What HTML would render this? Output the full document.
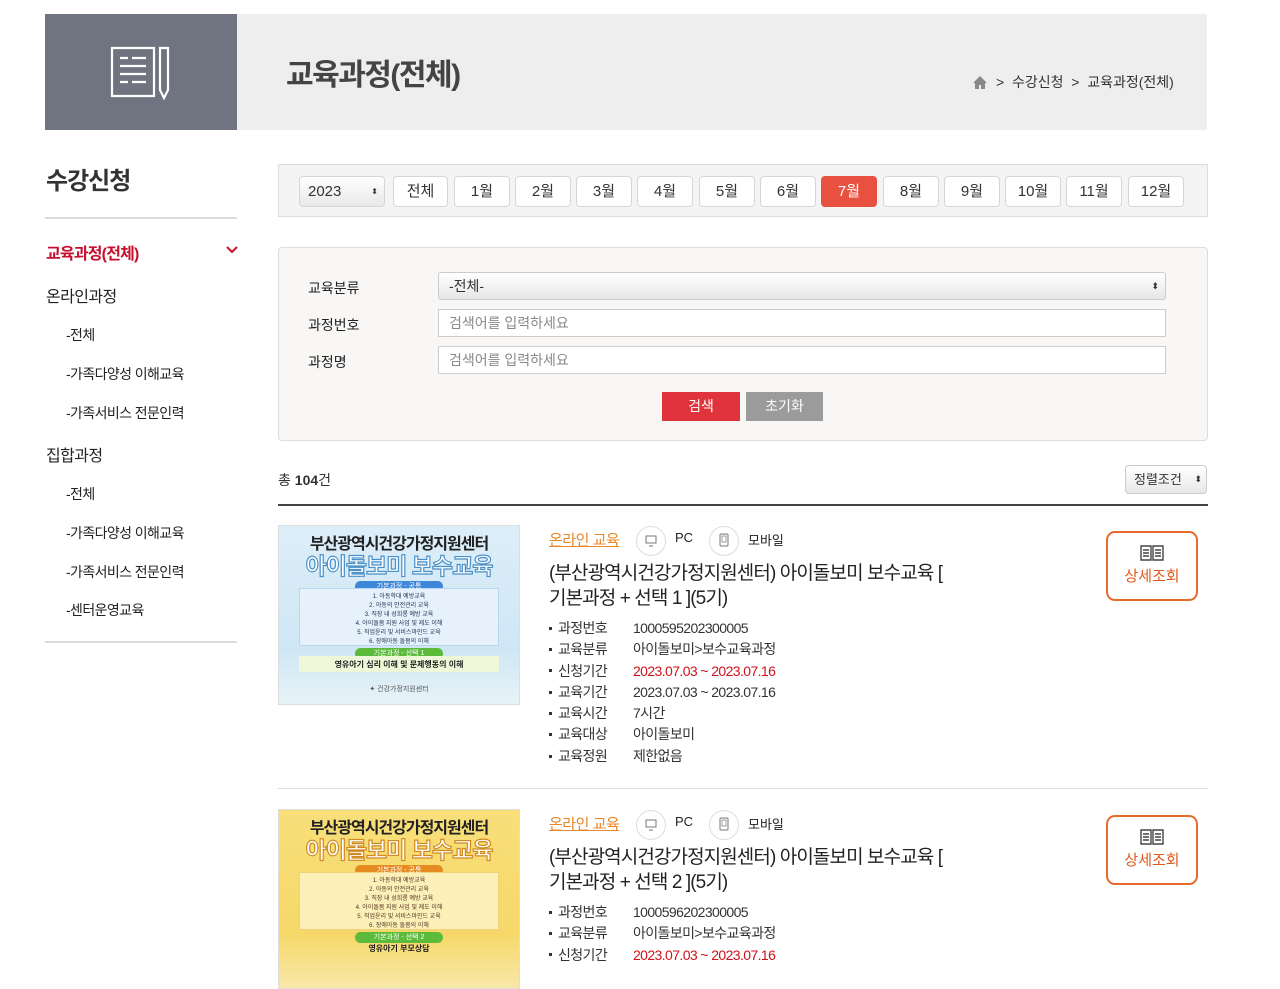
<!DOCTYPE html>
<html><head><meta charset="utf-8"><style>
*{margin:0;padding:0;box-sizing:border-box}
body{width:1280px;height:955px;overflow:hidden;background:#fff;font-family:"Liberation Sans","Noto Sans CJK KR",sans-serif;color:#222;position:relative}
.a{position:absolute;white-space:nowrap}
.mb{position:absolute;top:176px;height:31px;width:56px;border:1px solid #d6d6d6;border-radius:4px;background:#fff;font-size:15px;text-align:center;line-height:29px;color:#333}
.lbl{position:absolute;left:308px;font-size:14px;color:#222}
.inp{position:absolute;left:438px;width:728px;height:28px;border:1px solid #ccc;background:#fff;font-size:14px;color:#888;padding-left:10px;line-height:26px}
.sm{position:absolute;left:66px;font-size:14px;color:#222;letter-spacing:-0.6px}
.det{position:absolute;left:549px;font-size:14px;line-height:21.3px;color:#333;letter-spacing:-0.6px}
.det div{white-space:nowrap}
.det b{font-weight:normal;display:inline-block;width:84px}
.det b:before{content:"";display:inline-block;width:3px;height:3px;background:#333;margin:0 6px 2px 0;vertical-align:middle}
.circ{position:absolute;width:30px;height:30px;border-radius:50%;border:1px solid #ddd;background:#fff}
.btn{position:absolute;left:1106px;width:92px;height:70px;border:2px solid #e56a2b;border-radius:9px;color:#e05a1b;font-size:15px;text-align:center}
.img{position:absolute;left:278px;width:242px;height:180px;border:1px solid #ddd;overflow:hidden;text-align:center}
.tt{position:absolute;left:549px;font-size:19px;line-height:24.5px;color:#222;letter-spacing:-0.9px;white-space:nowrap}
</style></head><body>
<div class="a" style="left:45px;top:14px;width:192px;height:116px;background:#6f7480"></div>
<svg class="a" style="left:110px;top:44px" width="64" height="56" viewBox="0 0 64 56" fill="none" stroke="#fff" stroke-width="2.2">
<rect x="2" y="4" width="42" height="48"/>
<path d="M10 14h8M22 14h14M10 22h26M10 30h26M10 38h8M22 38h14"/>
<path d="M50 4h8v42l-4 8-4-8z"/></svg>
<div class="a" style="left:237px;top:14px;width:970px;height:116px;background:#eeeeee"></div>
<div class="a" style="left:286px;top:50px;font-size:30px;font-weight:bold;color:#444;letter-spacing:-1.5px">교육과정(전체)</div>
<svg class="a" style="left:973px;top:76px" width="14" height="13" viewBox="0 0 14 13"><path d="M7 0L0 7h2v6h4V9h2v4h4V7h2z" fill="#888"/></svg>
<div class="a" style="left:996px;top:72px;font-size:14px;color:#333">&gt; &nbsp;수강신청 &nbsp;&gt; &nbsp;교육과정(전체)</div>
<div class="a" style="left:46px;top:161px;font-size:24px;font-weight:bold;color:#333;letter-spacing:-1px">수강신청</div>
<div class="a" style="left:45px;top:217px;width:192px;height:2px;background:#ddd"></div>
<div class="a" style="left:46px;top:240px;font-size:16px;font-weight:bold;color:#c8102e;letter-spacing:-0.8px">교육과정(전체)</div>
<svg class="a" style="left:226px;top:246px" width="12" height="8"><path d="M1 1l5 5 5-5" stroke="#c8102e" stroke-width="2" fill="none"/></svg>
<div class="a" style="left:46px;top:283px;font-size:16px;color:#222;letter-spacing:-0.6px">온라인과정</div>
<div class="sm" style="top:325px">-전체</div>
<div class="sm" style="top:364px">-가족다양성 이해교육</div>
<div class="sm" style="top:403px">-가족서비스 전문인력</div>
<div class="a" style="left:46px;top:442px;font-size:16px;color:#222;letter-spacing:-0.6px">집합과정</div>
<div class="sm" style="top:484px">-전체</div>
<div class="sm" style="top:523px">-가족다양성 이해교육</div>
<div class="sm" style="top:562px">-가족서비스 전문인력</div>
<div class="sm" style="top:600px">-센터운영교육</div>
<div class="a" style="left:45px;top:641px;width:192px;height:2px;background:#ddd"></div>
<div class="a" style="left:278px;top:164px;width:930px;height:53px;background:#f4f4f4;border:1px solid #ddd"></div>
<div class="a" style="left:299px;top:176px;width:86px;height:31px;border:1px solid #d6d6d6;border-radius:4px;background:linear-gradient(#fff,#e8e8e8);font-size:15px;line-height:29px;padding-left:8px;color:#333">2023<span style="position:absolute;right:6px;font-size:8px;top:0">⬍</span></div>
<div class="mb" style="left:393px;width:55px">전체</div>
<div class="mb" style="left:454px">1월</div>
<div class="mb" style="left:515px">2월</div>
<div class="mb" style="left:576px">3월</div>
<div class="mb" style="left:637px">4월</div>
<div class="mb" style="left:699px">5월</div>
<div class="mb" style="left:760px">6월</div>
<div class="mb" style="left:821px;background:#e8503f;border-color:#e8503f;color:#fff">7월</div>
<div class="mb" style="left:883px">8월</div>
<div class="mb" style="left:944px">9월</div>
<div class="mb" style="left:1005px">10월</div>
<div class="mb" style="left:1066px">11월</div>
<div class="mb" style="left:1128px">12월</div>
<div class="a" style="left:278px;top:247px;width:930px;height:194px;background:#f8f7f6;border:1px solid #ddd;border-radius:4px"></div>
<div class="lbl" style="top:278px">교육분류</div>
<div class="inp" style="top:272px;background:linear-gradient(#fff,#e6e6e6);color:#333;border-radius:3px">-전체-<span style="position:absolute;right:6px;font-size:9px">⬍</span></div>
<div class="lbl" style="top:315px">과정번호</div>
<div class="inp" style="top:309px">검색어를 입력하세요</div>
<div class="lbl" style="top:352px">과정명</div>
<div class="inp" style="top:346px">검색어를 입력하세요</div>
<div class="a" style="left:662px;top:392px;width:78px;height:29px;background:#e0343c;color:#fff;font-size:14px;text-align:center;line-height:29px">검색</div>
<div class="a" style="left:746px;top:392px;width:77px;height:29px;background:#9b9b9b;color:#fff;font-size:14px;text-align:center;line-height:29px">초기화</div>
<div class="a" style="left:278px;top:470px;font-size:14px;color:#333">총 <b>104</b>건</div>
<div class="a" style="left:1125px;top:465px;width:82px;height:29px;border:1px solid #ccc;border-radius:4px;background:linear-gradient(#fff,#e8e8e8);font-size:13px;line-height:27px;padding-left:8px;color:#333">정렬조건<span style="position:absolute;right:4px;font-size:9px">⬍</span></div>
<div class="a" style="left:278px;top:504px;width:930px;height:2px;background:#444"></div>
<div class="img" style="top:525px;background:linear-gradient(#dceef8,#cfe7f5 70%,#e8f3f8)">
<div style="font-size:16px;font-weight:bold;color:#222;margin-top:4px;letter-spacing:-1px">부산광역시건강가정지원센터</div>
<div style="font-size:23px;font-weight:bold;color:#fff;-webkit-text-stroke:1.2px #4a90c8;line-height:24px;letter-spacing:-1px">아이돌보미 보수교육</div>
<div style="margin:3px auto 0;width:88px;height:11px;background:#3d86d8;border-radius:6px;font-size:7px;color:#fff;line-height:11px">기본과정 - 공통</div>
<div style="margin:-4px auto 0;width:200px;height:58px;background:#e6f1fb;border:1px solid #b8d6f0;font-size:6px;line-height:9px;color:#235;padding-top:4px">1. 아동학대 예방교육<br>2. 아동의 안전관리 교육<br>3. 직장 내 성희롱 예방 교육<br>4. 아이돌봄 지원 사업 및 제도 이해<br>5. 직업윤리 및 서비스마인드 교육<br>6. 장애아동 돌봄의 이해</div>
<div style="margin:2px auto 0;width:88px;height:11px;background:#5cbb3a;border-radius:6px;font-size:7px;color:#fff;line-height:11px">기본과정 - 선택 1</div>
<div style="margin:-3px auto 0;width:200px;height:16px;background:#eef7d8;font-size:8px;font-weight:bold;line-height:18px">영유아기 심리 이해 및 문제행동의 이해</div>
<div style="font-size:7px;color:#555;margin-top:12px">✦ 건강가정지원센터</div>
</div>
<div class="a" style="left:549px;top:529px;font-size:15px;color:#e8862a;text-decoration:underline;letter-spacing:-0.5px">온라인 교육</div>
<div class="circ" style="left:636px;top:526px"></div><svg class="a" style="left:645px;top:535px" width="12" height="12"><rect x="1" y="1" width="10" height="7" fill="none" stroke="#777"/><path d="M4 11h4" stroke="#777"/></svg>
<div class="a" style="left:675px;top:530px;font-size:13px">PC</div>
<div class="circ" style="left:709px;top:526px"></div><svg class="a" style="left:719px;top:533px" width="10" height="14"><rect x="1" y="1" width="8" height="12" rx="1" fill="none" stroke="#777"/><rect x="3" y="3" width="4" height="6" fill="none" stroke="#777" stroke-width=".7"/></svg>
<div class="a" style="left:748px;top:530px;font-size:13px">모바일</div>
<div class="tt" style="top:562px">(부산광역시건강가정지원센터) 아이돌보미 보수교육 [<br>기본과정 + 선택 1 ](5기)</div>
<div class="det" style="top:618px">
<div><b>과정번호</b>1000595202300005</div>
<div><b>교육분류</b>아이돌보미&gt;보수교육과정</div>
<div><b>신청기간</b><span style="color:#d0121b">2023.07.03 ~ 2023.07.16</span></div>
<div><b>교육기간</b>2023.07.03 ~ 2023.07.16</div>
<div><b>교육시간</b>7시간</div>
<div><b>교육대상</b>아이돌보미</div>
<div><b>교육정원</b>제한없음</div>
</div>
<div class="btn" style="top:531px"><svg style="margin-top:12px" width="24" height="16" viewBox="0 0 24 16" fill="none" stroke="#444" stroke-width="1.4"><path d="M1 1h10v14H1zM13 1h10v14H13zM3 5h6M3 8h6M3 11h6M15 5h6M15 8h6M15 11h6"/></svg><div>상세조회</div></div>
<div class="a" style="left:278px;top:788px;width:930px;height:1px;background:#ddd"></div>
<div class="img" style="top:809px;background:linear-gradient(#f8df7a,#f6d86a 70%,#f8e8a8)">
<div style="font-size:16px;font-weight:bold;color:#222;margin-top:4px;letter-spacing:-1px">부산광역시건강가정지원센터</div>
<div style="font-size:23px;font-weight:bold;color:#fff;-webkit-text-stroke:1.2px #d08a20;line-height:24px;letter-spacing:-1px">아이돌보미 보수교육</div>
<div style="margin:3px auto 0;width:88px;height:11px;background:#e58b22;border-radius:6px;font-size:7px;color:#fff;line-height:11px">기본과정 - 공통</div>
<div style="margin:-4px auto 0;width:200px;height:58px;background:#fbf0b8;border:1px solid #eed27a;font-size:6px;line-height:9px;color:#532;padding-top:4px">1. 아동학대 예방교육<br>2. 아동의 안전관리 교육<br>3. 직장 내 성희롱 예방 교육<br>4. 아이돌봄 지원 사업 및 제도 이해<br>5. 직업윤리 및 서비스마인드 교육<br>6. 장애아동 돌봄의 이해</div>
<div style="margin:2px auto 0;width:88px;height:11px;background:#5cbb3a;border-radius:6px;font-size:7px;color:#fff;line-height:11px">기본과정 - 선택 2</div>
<div style="font-size:8px;font-weight:bold;line-height:12px">영유아기 부모상담</div>
</div>
<div class="a" style="left:549px;top:813px;font-size:15px;color:#e8862a;text-decoration:underline;letter-spacing:-0.5px">온라인 교육</div>
<div class="circ" style="left:636px;top:810px"></div><svg class="a" style="left:645px;top:819px" width="12" height="12"><rect x="1" y="1" width="10" height="7" fill="none" stroke="#777"/><path d="M4 11h4" stroke="#777"/></svg>
<div class="a" style="left:675px;top:814px;font-size:13px">PC</div>
<div class="circ" style="left:709px;top:810px"></div><svg class="a" style="left:719px;top:817px" width="10" height="14"><rect x="1" y="1" width="8" height="12" rx="1" fill="none" stroke="#777"/><rect x="3" y="3" width="4" height="6" fill="none" stroke="#777" stroke-width=".7"/></svg>
<div class="a" style="left:748px;top:814px;font-size:13px">모바일</div>
<div class="tt" style="top:846px">(부산광역시건강가정지원센터) 아이돌보미 보수교육 [<br>기본과정 + 선택 2 ](5기)</div>
<div class="det" style="top:902px">
<div><b>과정번호</b>1000596202300005</div>
<div><b>교육분류</b>아이돌보미&gt;보수교육과정</div>
<div><b>신청기간</b><span style="color:#d0121b">2023.07.03 ~ 2023.07.16</span></div>
</div>
<div class="btn" style="top:815px"><svg style="margin-top:12px" width="24" height="16" viewBox="0 0 24 16" fill="none" stroke="#444" stroke-width="1.4"><path d="M1 1h10v14H1zM13 1h10v14H13zM3 5h6M3 8h6M3 11h6M15 5h6M15 8h6M15 11h6"/></svg><div>상세조회</div></div>
</body></html>
